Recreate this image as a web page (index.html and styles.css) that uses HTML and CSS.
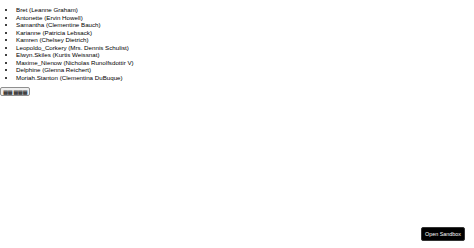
FILE: index.html
```html
<!DOCTYPE html>
<html>
<head>
<meta charset="utf-8">
<link rel="stylesheet" href="styles.css">
</head>
<body>
<ul class="users">
<li>Bret (Leanne Graham)</li>
<li>Antonette (Ervin Howell)</li>
<li>Samantha (Clementine Bauch)</li>
<li>Karianne (Patricia Lebsack)</li>
<li>Kamren (Chelsey Dietrich)</li>
<li>Leopoldo_Corkery (Mrs. Dennis Schulist)</li>
<li>Elwyn.Skiles (Kurtis Weissnat)</li>
<li>Maxime_Nienow (Nicholas Runolfsdottir V)</li>
<li>Delphine (Glenna Reichert)</li>
<li>Moriah.Stanton (Clementina DuBuque)</li>
</ul>
<button class="toggle"><span class="tofu">▦▦</span><span class="tofu">▦▦▦</span></button>
<a class="sandbox">Open Sandbox</a>
</body>
</html>
```
FILE: styles.css
```css
html, body {
  margin: 0;
  padding: 0;
  background: #fff;
}
body {
  font-family: "Liberation Sans", Arial, sans-serif;
  font-size: 6.2px;
  line-height: 7.5px;
  color: #000;
}
.users {
  margin: 6px 0 6px 0;
  padding-left: 16px;
}
.toggle {
  display: flex;
  gap: 1px;
  align-items: center;
  height: 9px;
  padding: 0 2px;
  margin: 0;
  border: 1px solid #8f8f8f;
  border-radius: 2px;
  background: #efefef;
  font-family: "DejaVu Sans", sans-serif;
  font-size: 5.5px;
  line-height: 6px;
  color: #000;
}
.tofu {
  letter-spacing: -0.6px;
}
.sandbox {
  position: fixed;
  right: 9px;
  bottom: 7px;
  width: 44px;
  height: 14px;
  display: flex;
  align-items: center;
  justify-content: center;
  background: #000;
  color: #fff;
  border-radius: 2px;
  border: 1px solid #333;
  box-sizing: border-box;
  font-size: 5.4px;
  line-height: 6px;
}
```
